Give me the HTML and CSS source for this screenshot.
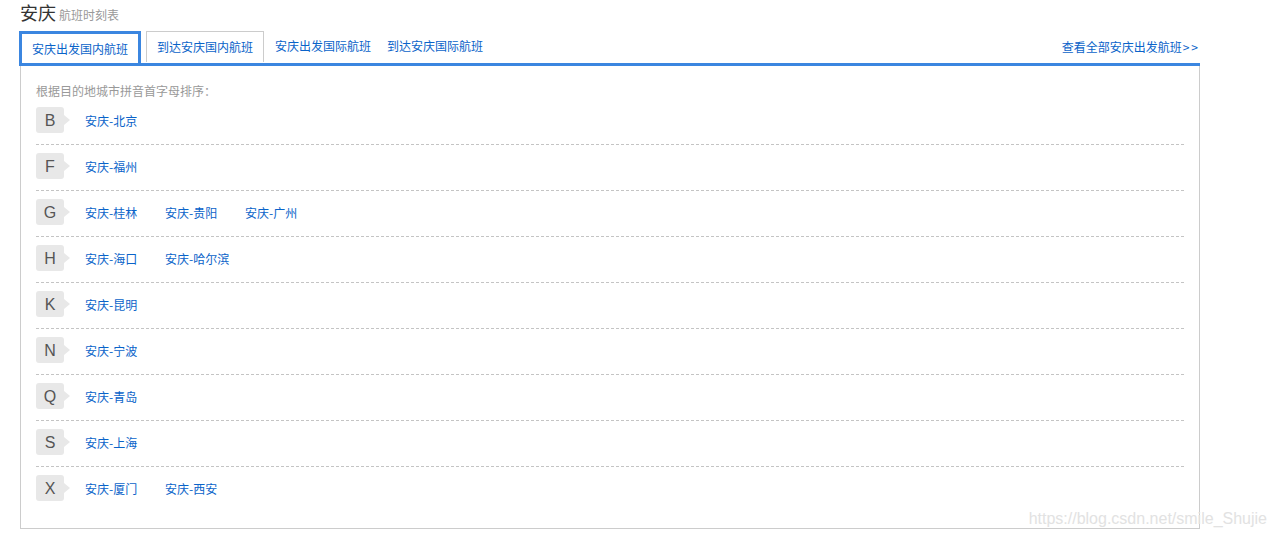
FILE: index.html
```html
<!DOCTYPE html>
<html lang="zh-CN">
<head>
    <meta charset="UTF-8">
    <title>安庆航班时刻表</title>
    <link rel="stylesheet" href="styles.css">
</head>
<body>

    <div class="wrap">
        <h1 class="title">安庆<small>航班时刻表</small></h1>

        <div class="tabs">
            <a href="#" class="tab active">安庆出发国内航班</a>
            <a href="#" class="tab boxed">到达安庆国内航班</a>
            <a href="#" class="tab plain">安庆出发国际航班</a>
            <a href="#" class="tab plain">到达安庆国际航班</a>
            <a href="#" class="more">查看全部安庆出发航班<span class="arrows">&gt;&gt;</span></a>
        </div>

        <div class="panel">
            <p class="tip">根据目的地城市拼音首字母排序：</p>

            <div class="row">
                <span class="letter">B</span>
                <a href="#">安庆-北京</a>
            </div>
            <div class="row">
                <span class="letter">F</span>
                <a href="#">安庆-福州</a>
            </div>
            <div class="row">
                <span class="letter">G</span>
                <a href="#">安庆-桂林</a>
                <a href="#">安庆-贵阳</a>
                <a href="#">安庆-广州</a>
            </div>
            <div class="row">
                <span class="letter">H</span>
                <a href="#">安庆-海口</a>
                <a href="#">安庆-哈尔滨</a>
            </div>
            <div class="row">
                <span class="letter">K</span>
                <a href="#">安庆-昆明</a>
            </div>
            <div class="row">
                <span class="letter">N</span>
                <a href="#">安庆-宁波</a>
            </div>
            <div class="row">
                <span class="letter">Q</span>
                <a href="#">安庆-青岛</a>
            </div>
            <div class="row">
                <span class="letter">S</span>
                <a href="#">安庆-上海</a>
            </div>
            <div class="row">
                <span class="letter">X</span>
                <a href="#">安庆-厦门</a>
                <a href="#">安庆-西安</a>
            </div>
        </div>
    </div>

    <div class="watermark">https://blog.csdn.net/smile_Shujie</div>

</body>
</html>
```

FILE: styles.css
```css
* {
    padding: 0;
    margin: 0;
    box-sizing: border-box;
}

body {
    background-color: #fff;
    font-family: "Microsoft YaHei", "Noto Sans CJK SC", sans-serif;
    font-size: 12px;
    color: #333;
    position: relative;
    height: 538px;
}

a {
    text-decoration: none;
    color: #0a63c9;
}

.wrap {
    width: 1180px;
    margin-left: 20px;
}

.title {
    font-size: 18px;
    font-weight: normal;
    line-height: 24px;
    height: 31px;
    color: #333;
}

.title small {
    font-size: 12px;
    color: #999;
    margin-left: 3px;
}

.tabs {
    display: flex;
    align-items: flex-end;
    height: 35px;
    border-bottom: 3px solid #3b86e0;
    margin-left: -1px;
}

.tab {
    display: block;
    height: 32px;
    line-height: 30px;
    margin-right: 5px;
    white-space: nowrap;
}

.tab.active {
    border: 3px solid #3b86e0;
    border-bottom: none;
    padding: 0 10px;
    line-height: 29px;
    height: 32px;
}

.tab.boxed {
    border: 1px solid #ccc;
    border-bottom: none;
    padding: 0 10px;
    height: 31px;
    margin-bottom: 1px;
}

.tab.plain {
    padding: 0 6px;
    margin-right: 4px;
}

.more {
    margin-left: auto;
    line-height: 32px;
    height: 32px;
    white-space: nowrap;
    flex-shrink: 0;
}

.more .arrows {
    letter-spacing: 2px;
    margin-left: 1px;
}

.panel {
    border: 1px solid #ccc;
    border-top: none;
    padding: 16px 15px 16px 15px;
}

.tip {
    color: #999;
    line-height: 17px;
}

.row {
    display: flex;
    align-items: center;
    height: 46px;
    padding-bottom: 3px;
    border-bottom: 1px dashed #c4c4c4;
}

.row:last-child {
    height: 45px;
    border-bottom: none;
}

.letter {
    position: relative;
    width: 28px;
    height: 26px;
    line-height: 27px;
    text-align: center;
    background-color: #e8e8e8;
    border-radius: 3px;
    font-family: "Liberation Sans", Arial, sans-serif;
    font-size: 16px;
    color: #555;
    margin-right: 21px;
}

.letter::after {
    content: "";
    position: absolute;
    right: -6px;
    top: 8px;
    border-top: 5px solid transparent;
    border-bottom: 5px solid transparent;
    border-left: 6px solid #e8e8e8;
}

.row a {
    display: inline-block;
    width: 80px;
}

.watermark {
    position: absolute;
    right: 10px;
    top: 510px;
    font-family: "Liberation Sans", Arial, sans-serif;
    font-size: 16px;
    color: #e2e2e2;
}
```
